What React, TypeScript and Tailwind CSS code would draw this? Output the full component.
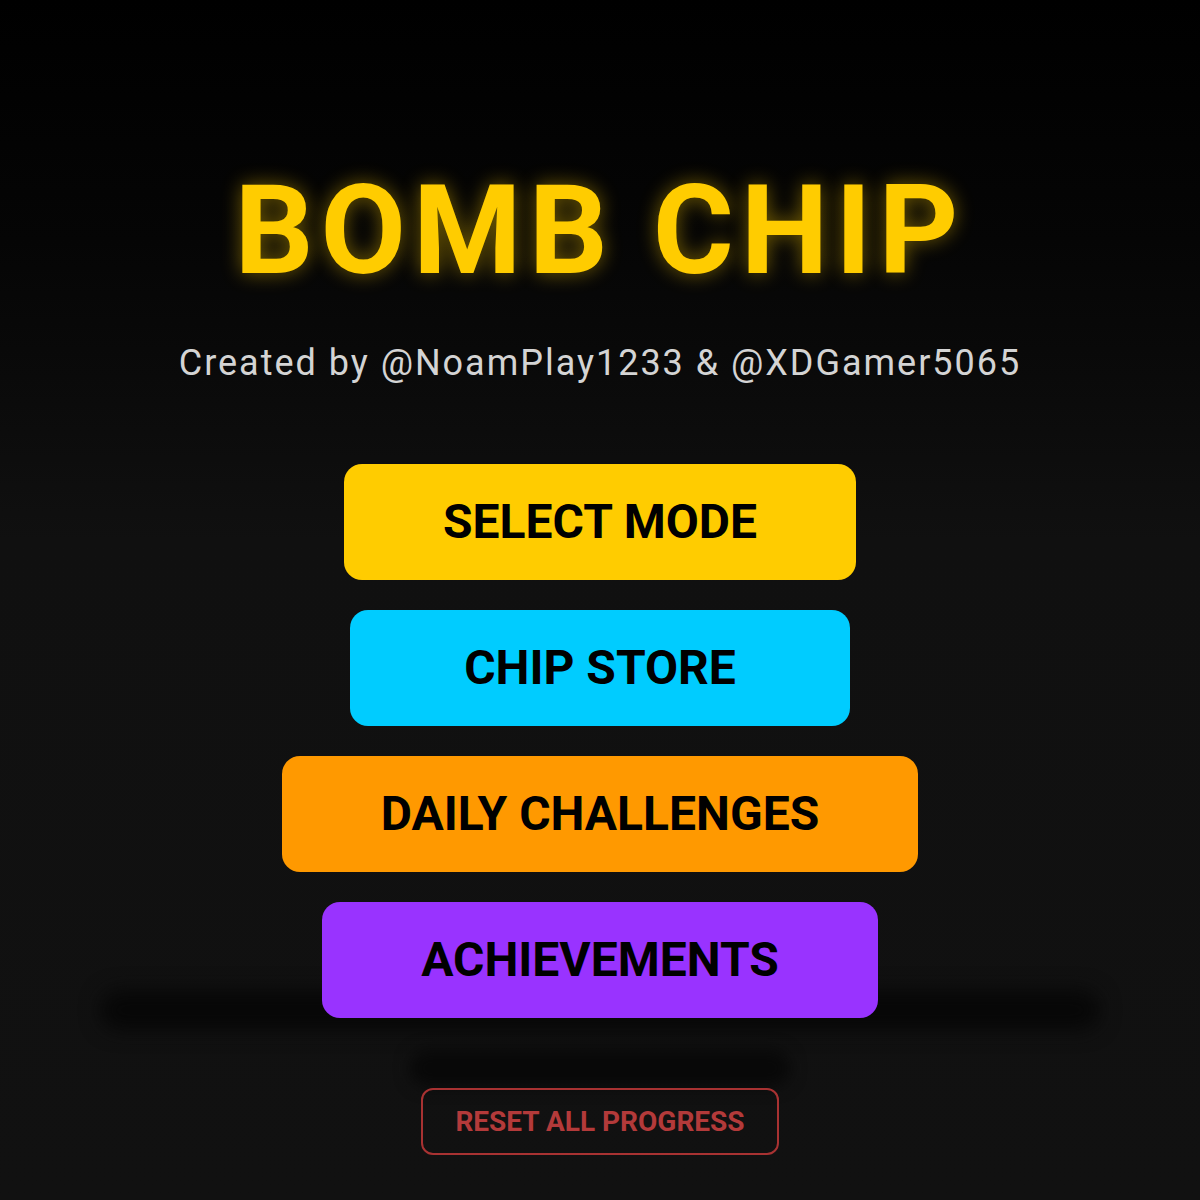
import React from 'react';

// 메인 메뉴 버튼 목록
const menuItems = [
  { label: 'SELECT MODE', className: 'bg-[#ffcc00]' },
  { label: 'CHIP STORE', className: 'bg-[#00ccff]' },
  { label: 'DAILY CHALLENGES', className: 'bg-[#ff9900]' },
  { label: 'ACHIEVEMENTS', className: 'bg-[#9933ff]' },
];

const App: React.FC = () => {
  return (
    <div
      className="relative min-h-[1200px] w-full overflow-hidden bg-[linear-gradient(to_bottom,#000000_0%,#050505_20%,#101010_45%,#111111_100%)] font-['Roboto',sans-serif]"
    >
      {/* 배경의 흐릿한 그림자 */}
      <div className="pointer-events-none absolute left-[100px] top-[990px] h-[40px] w-[1000px] rounded-[20px] bg-[#070707] blur-[10px]" />
      <div className="pointer-events-none absolute left-[410px] top-[1050px] h-[36px] w-[380px] rounded-[18px] bg-[#080808] blur-[8px]" />

      <div className="relative flex flex-col items-center pt-[169px]">
        {/* 타이틀 */}
        <h1 className="text-[124px] font-bold leading-none tracking-[7px] text-[#ffcc00] [text-shadow:0_0_20px_rgba(255,204,0,0.45)]">
          BOMB CHIP
        </h1>

        <p className="mt-[52px] text-[36px] leading-none tracking-[0.055em] text-[#d4d4d4]">
          Created by @NoamPlay1233 &amp; @XDGamer5065
        </p>

        {/* 메뉴 */}
        <div className="mt-[83px] flex flex-col items-center gap-[30px]">
          {menuItems.map((item) => (
            <button
              key={item.label}
              className={`${item.className} min-w-[500px] rounded-[18px] px-[99px] py-[34px] text-5xl font-bold leading-none text-black`}
            >
              {item.label}
            </button>
          ))}
        </div>

        <button className="mt-[70px] flex h-[67px] items-center rounded-[12px] border-2 border-[#a83232] bg-transparent px-[32px] text-[28px] font-bold leading-none text-[#b33a3a]">
          RESET ALL PROGRESS
        </button>
      </div>
    </div>
  );
};

export default App;
